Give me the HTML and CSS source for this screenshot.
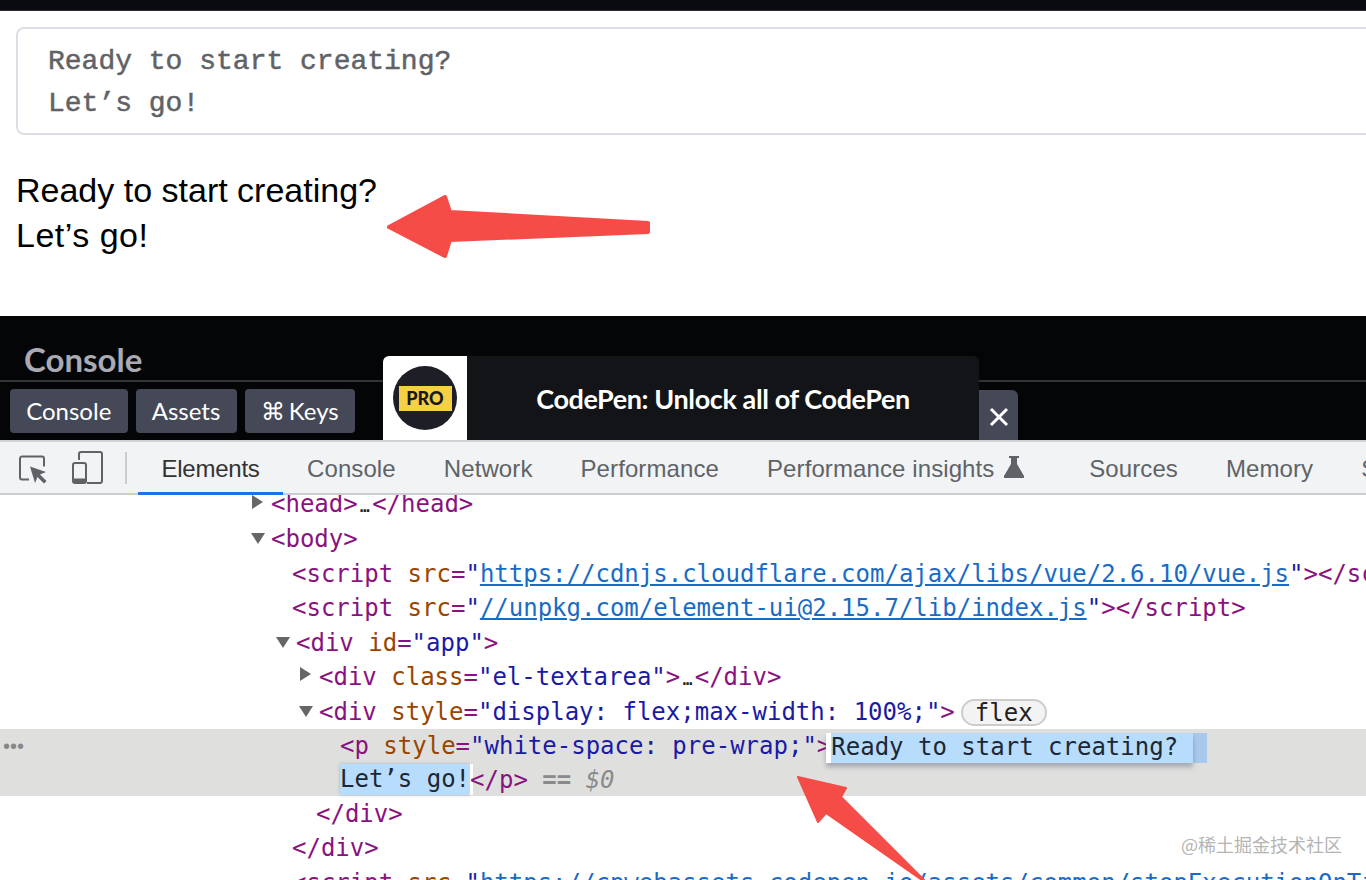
FILE: index.html
```html
<!DOCTYPE html>
<html lang="en">
<head>
<meta charset="utf-8">
<title>Console</title>
<link rel="stylesheet" href="styles.css">
</head>
<body>
<div class="page">
  <div class="topbar"></div>
  <section class="preview">
    <div class="textarea">Ready to start creating?<br>Let’s go!</div>
    <p class="result">Ready to start creating?<br><span class="result-second">Let’s go!</span></p>
  </section>
  <section class="cp">
    <h2 class="cp-title">Console</h2>
    <div class="cp-bar">
      <span class="cp-btn">Console</span>
      <span class="cp-btn">Assets</span>
      <span class="cp-btn cp-keys">⌘ Keys</span>
    </div>
  </section>
  <nav class="toolbar">
    <svg class="ic-inspect" width="30" height="32" viewBox="0 0 30 32">
      <path d="M10 27.500H3a2 2 0 0 1-2-2V6.500a2 2 0 0 1 2-2h20a2 2 0 0 1 2 2v8" fill="none" stroke="#5f6368" stroke-width="2"/>
      <path d="M11 14.500l16 5.500-6 2.500 6.500 6.500-2.500 2.500-6.500-6.500-2.500 6z" fill="#5f6368"/>
    </svg>
    <svg class="ic-device" width="32" height="33" viewBox="0 0 32 33">
      <path d="M8 9V3a2 2 0 0 1 2-2h19a2 2 0 0 1 2 2v27a2 2 0 0 1-2 2H16" fill="none" stroke="#5f6368" stroke-width="2"/>
      <rect x="2" y="12" width="13" height="20" rx="2" fill="none" stroke="#5f6368" stroke-width="2"/>
      <path d="M2 29.500h13" stroke="#5f6368" stroke-width="4"/>
    </svg>
    <span class="sep"></span>
    <span class="tab active">Elements</span>
    <span class="tab">Console</span>
    <span class="tab">Network</span>
    <span class="tab">Performance</span>
    <span class="tab tab-flask">Performance insights
      <svg class="flask" width="20" height="22" viewBox="0 0 20 22"><path d="M5 0h10v2h-2v6l7 12a1.300 1.300 0 0 1-1 2H1a1.300 1.300 0 0 1-1-2L7 8V2H5z" fill="#5f6368"/></svg>
    </span>
    <span class="tab">Sources</span>
    <span class="tab">Memory</span>
    <span class="tab">Security</span>
  </nav>
  <section class="dom">
    <div class="row i1"><span class="tw closed"></span><span class="t">&lt;head&gt;</span><span class="dots">…</span><span class="t">&lt;/head&gt;</span></div>
    <div class="row i1"><span class="tw open"></span><span class="t">&lt;body&gt;</span></div>
    <div class="row i2"><span class="t">&lt;script</span> <span class="a">src</span><span class="t">=</span><span class="v">"</span><span class="l">https://cdnjs.cloudflare.com/ajax/libs/vue/2.6.10/vue.js</span><span class="v">"</span><span class="t">&gt;&lt;/script&gt;</span></div>
    <div class="row i2"><span class="t">&lt;script</span> <span class="a">src</span><span class="t">=</span><span class="v">"</span><span class="l">//unpkg.com/element-ui@2.15.7/lib/index.js</span><span class="v">"</span><span class="t">&gt;&lt;/script&gt;</span></div>
    <div class="row i3"><span class="tw open"></span><span class="t">&lt;div</span> <span class="a">id</span><span class="t">=</span><span class="v">"app"</span><span class="t">&gt;</span></div>
    <div class="row i4"><span class="tw closed"></span><span class="t">&lt;div</span> <span class="a">class</span><span class="t">=</span><span class="v">"el-textarea"</span><span class="t">&gt;</span><span class="dots">…</span><span class="t">&lt;/div&gt;</span></div>
    <div class="row i4"><span class="tw open"></span><span class="t">&lt;div</span> <span class="a">style</span><span class="t">=</span><span class="v">"display: flex;max-width: 100%;"</span><span class="t">&gt;</span><span class="badge">flex</span></div>
    <div class="selected">
      <span class="more">•••</span>
      <div class="row i5"><span class="t">&lt;p</span> <span class="a">style</span><span class="t">=</span><span class="v">"white-space: pre-wrap;"</span><span class="t">&gt;</span><span class="hl hl-first">Ready to start creating?</span></div>
      <div class="row i5 row-second"><span class="hl hl-second">Let’s go!</span><span class="t">&lt;/p&gt;</span> <span class="eq">==</span> <span class="ref">$0</span></div>
    </div>
    <div class="row i6"><span class="t">&lt;/div&gt;</span></div>
    <div class="row i7"><span class="t">&lt;/div&gt;</span></div>
    <div class="row i7"><span class="t">&lt;script</span> <span class="a">src</span><span class="t">=</span><span class="v">"</span><span class="l">https://cpwebassets.codepen.io/assets/common/stopExecutionOnTimeout.js</span><span class="v">"</span><span class="t">&gt;</span></div>
  </section>

  <aside class="promo">
    <div class="promo-logo">
      <svg width="64" height="64" viewBox="0 0 64 64">
        <circle cx="32" cy="32" r="32" fill="#1e1f26"/>
        <rect x="6" y="20" width="53" height="25" fill="#f5cf46"/>
      </svg>
      <span class="pro-text">PRO</span>
    </div>
    <div class="promo-text">CodePen: Unlock all of CodePen</div>
    <div class="promo-close">
      <svg width="22" height="22" viewBox="0 0 22 22"><path d="M3 3l16 16M19 3L3 19" stroke="#fff" stroke-width="3"/></svg>
    </div>
  </aside>

  <svg class="arrow arrow-one" width="280" height="76" viewBox="380 190 280 76">
    <path d="M389 227L445 197L450 212L648 223V232L450 240L445 256Z" fill="#f54c48" stroke="#f54c48" stroke-width="4" stroke-linejoin="round"/>
  </svg>
  <svg class="arrow arrow-two" width="140" height="110" viewBox="790 770 140 110">
    <path d="M798 777L846 788L841 797L924 880H922L826 813L818 822Z" fill="#f54c48" stroke="#f54c48" stroke-width="2" stroke-linejoin="round"/>
  </svg>
  <div class="watermark">@稀土掘金技术社区</div>
</div>
</body>
</html>
```
FILE: styles.css
```css
* { box-sizing: border-box; }
html, body { margin: 0; padding: 0; background: #fff; }
.page { position: relative; width: 1366px; height: 880px; overflow: hidden; background: #fff; }

.topbar { height: 11px; background: #0a0b0f; border-bottom: 1px solid #2c2d30; }

.preview { height: 305px; padding: 16px 0 0 16px; }
.textarea {
  width: 1400px; height: 108px; padding: 12px 30px;
  border: 2px solid #dcdfe6; border-radius: 8px;
  font: 400 28px/42px "Liberation Mono", monospace; color: #606266;
  -webkit-text-stroke: .5px #606266;
}
.result { margin: 33px 0 0; font: 34px/45px "Liberation Sans", Arial, sans-serif; color: #000; }
.result-second { letter-spacing: .5px; }

.cp { height: 124px; background: #040507; display: flex; flex-direction: column; }
.cp-title {
  height: 66px; margin: 0; padding: 23px 0 0 24px;
  border-bottom: 2px solid #333;
  font: 700 33px/40px Lato, sans-serif; color: #a9aab4;
}
.cp-bar { display: flex; gap: 8px; padding: 7px 0 0 10px; }
.cp-btn {
  height: 44px; padding: 0 16.2px; border-radius: 4px; background: #444857;
  font: 24px/44px Lato, sans-serif; color: #fff;
}
.cp-keys { word-spacing: -2px; }

.toolbar {
  height: 55px; display: flex; align-items: center; overflow: hidden; white-space: nowrap;
  background: #f1f3f4; border-top: 2px solid #d0d2d4; box-shadow: inset 0 -2px 0 #cbcdd0;
  font: 24px "Liberation Sans", Arial, sans-serif; letter-spacing: .1px; color: #5f6368;
}
.ic-inspect { margin: 0 0 2px 19px; flex: none; }
.ic-device { margin: 0 0 2px 22px; flex: none; }
.sep { width: 2px; height: 32px; margin: 0 11px 2px 22px; background: #ccc; flex: none; }
.tab { flex: none; height: 100%; padding: 0 24px; line-height: 54px; }
.tab.active { width: 145px; padding: 0 23.5px; letter-spacing: -.25px; color: #333; box-shadow: inset 0 -3px 0 #1a73e8; }
.tab-flask { padding-right: 41px; }
.flask { margin-left: 3px; vertical-align: -1px; }

.dom { height: 385px; overflow: hidden; font: 24px/34.5px "DejaVu Sans Mono", monospace; color: #222; }
.row { position: relative; height: 34.5px; white-space: pre; }
.dom > .row:first-child { margin-top: -7.5px; line-height: 33.5px; }
.i1 { padding-left: 271px; }
.i2 { padding-left: 292px; }
.i3 { padding-left: 296px; }
.i4 { padding-left: 319px; }
.i5 { padding-left: 340px; }
.i6 { padding-left: 316px; }
.i7 { padding-left: 292px; }
.t { color: #881280; }
.a { color: #994500; }
.v { color: #1a1aa6; }
.l { color: #1a6bc4; text-decoration: underline; }
.dots { display: inline-block; width: 14.45px; text-align: center; font-weight: 700; font-size: 16px; color: #222; }

.tw { position: absolute; width: 0; height: 0; margin-left: -20px; }
.tw.closed { top: 7px; border-left: 11px solid #666; border-top: 7px solid transparent; border-bottom: 7px solid transparent; margin-left: -19px; }
.tw.open { top: 11px; border-top: 11px solid #666; border-left: 7px solid transparent; border-right: 7px solid transparent; }

.badge {
  display: inline-block; height: 27px; margin-left: 6px; padding: 0 12px;
  border: 2px solid #ccc; border-radius: 14px; background: #f3f3f3;
  line-height: 25px; color: #222; vertical-align: -1px;
}

.selected { position: relative; height: 67px; margin-bottom: .5px; background: #dfe0de; }
.selected .row { height: 34px; }
.selected .row-second { height: 33px; line-height: 35.5px; }
.more { position: absolute; left: 3px; top: 7px; font: 20px/20px "Liberation Sans", sans-serif; color: #888; }
.hl { display: inline-block; background: #b8dcfb; color: #1c2733; }
.hl-first {
  height: 30px; margin-top: 4px; margin-left: -5px; line-height: 28px; vertical-align: top;
  padding-right: 15px; border-left: 5px solid #fff;
  box-shadow: 0 4px 5px rgba(90,100,120,.45), 14px 0 0 #a9c9ec;
}
.hl-second { height: 31px; margin-top: 1px; line-height: 31px; vertical-align: top; box-shadow: 3px 0 0 #fff, 0 0 3px rgba(90,100,120,.4); }
.eq { color: #8a8a8a; font-weight: 700; }
.ref { color: #8a8a8a; font-style: italic; }

.promo { position: absolute; left: 383px; top: 356px; height: 84px; display: flex; align-items: flex-end; }
.promo-logo {
  position: relative; width: 84px; height: 84px; padding: 10px; background: #fff;
  border-radius: 6px 0 0 0;
}
.promo-logo svg { display: block; }
.pro-text {
  position: absolute; left: 10px; top: 31px; width: 64px; text-align: center;
  font: 900 18px/23px Lato, sans-serif; color: #17181c;
}
.promo-text {
  width: 512px; height: 84px; background: #131417; border-radius: 0 6px 0 0;
  text-align: center; font: 700 27px/86px Lato, sans-serif; letter-spacing: -.4px; color: #fff;
}
.promo-close {
  width: 39px; height: 50px; display: flex; align-items: center; justify-content: center;
  padding-top: 4px; background: #444857; border-radius: 0 6px 0 0;
}

.arrow { position: absolute; }
.arrow-one { left: 380px; top: 190px; }
.arrow-two { left: 790px; top: 770px; }
.watermark {
  position: absolute; left: 1181px; top: 831px;
  font: 18px/26px "Noto Sans CJK SC", sans-serif; color: #b4b4b4;
}
```
